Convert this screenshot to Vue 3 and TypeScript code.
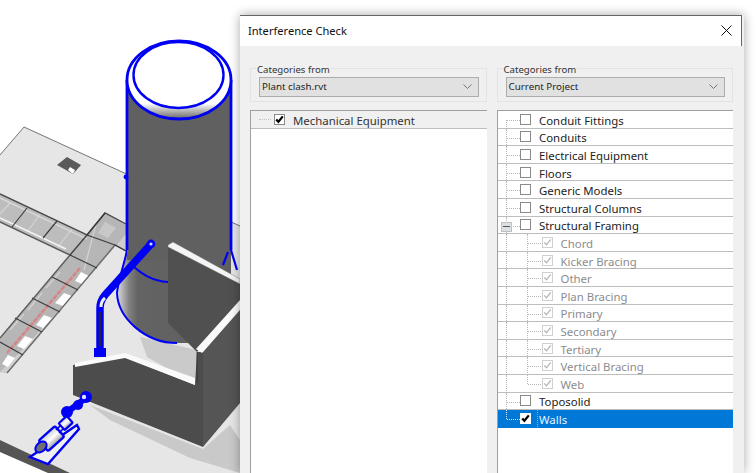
<script setup lang="ts">
interface Row {
  label: string
  level: 0 | 1
  state: 'off' | 'on' | 'dim'
  guides: string
  expander?: boolean
  selected?: boolean
}

const child = (label: string, last = false): Row => ({
  label,
  level: 1,
  state: 'dim',
  guides: last ? 'trunk branch2 stem-end' : 'trunk branch2 stem',
})
const top = (label: string, guides = 'trunk branch1'): Row => ({ label, level: 0, state: 'off', guides })

const rows: Row[] = [
  top('Conduit Fittings', 'trunk-start branch1'),
  top('Conduits'),
  top('Electrical Equipment'),
  top('Floors'),
  top('Generic Models'),
  top('Structural Columns'),
  { label: 'Structural Framing', level: 0, state: 'off', guides: 'trunk branch1', expander: true },
  child('Chord'),
  child('Kicker Bracing'),
  child('Other'),
  child('Plan Bracing'),
  child('Primary'),
  child('Secondary'),
  child('Tertiary'),
  child('Vertical Bracing'),
  child('Web', true),
  top('Toposolid'),
  { label: 'Walls', level: 0, state: 'on', guides: 'trunk-end branch1', selected: true },
]

const ribs = [
  [27, 208, 12, 227], [57, 221, 43, 238], [87, 235, 70, 255],
  [70, 255, 97, 268], [52, 277, 78, 290], [32, 298, 60, 312], [15, 318, 42, 332], [0, 342, 23, 355],
  [87, 235, 115, 245], [105, 213, 87, 235], [115, 245, 126, 251],
]
const pillars = [
  [10, 203, 0, 214], [40, 214, 28, 231], [72, 229, 58, 247],
  [96, 224, 84, 270], [60, 272, 46, 288], [42, 293, 28, 310], [24, 314, 10, 330],
]
const patches = [
  '64,293 72,296 63,306 55,303',
  '44,315 52,318 43,328 36,325',
  '25,336 33,339 24,349 17,346',
  '8,355 15,358 8,367 2,364',
  '81,272 89,276 82,284 75,281',
]
</script>

<template>
  <div class="stage">
    <svg class="scene" width="240" height="473" viewBox="0 0 240 473">
      <defs>
        <linearGradient id="rim" x1="0" y1="0" x2="0" y2="1">
          <stop offset="0.8" stop-color="#ffffff" />
          <stop offset="1" stop-color="#666666" />
        </linearGradient>
        <linearGradient id="flare" x1="0" y1="0" x2="1" y2="0">
          <stop offset="0" stop-color="#dddddd" />
          <stop offset="0.1" stop-color="#808080" />
          <stop offset="0.17" stop-color="#636363" />
          <stop offset="1" stop-color="#5f5f5f" />
        </linearGradient>
        <linearGradient id="motor" x1="0" y1="0" x2="0" y2="1">
          <stop offset="0" stop-color="#cfcfcf" />
          <stop offset="0.5" stop-color="#ffffff" />
          <stop offset="1" stop-color="#9a9a9a" />
        </linearGradient>
      </defs>

      <polygon points="24,127 240,226 240,473 70,473 0,440 0,155" fill="#e6e6e6" />
      <polyline points="0,155 24,127 240,226" fill="none" stroke="#555" stroke-width="0.8" />
      <polygon points="0,440 70,473 48,473 0,452" fill="#555" />
      <polygon points="57,165 67,157 81,165 73,174" fill="#5a5a5a" />
      <polygon points="68,170 70,167 75,170 73,174" fill="#fff" />

      <polygon points="0,194 87,235 70,255 0,222" fill="#bdbdbd" />
      <polygon points="70,255 105,213 126,224 126,251 115,245 7,373 0,372 0,338" fill="#b6b6b6" />
      <polygon points="97,268 126,234 126,251 115,245 7,373 0,372 26,346" fill="#cfcfcf" />
      <polygon v-for="p in patches" :key="p" :points="p" fill="#fff" />
      <polygon points="105,222 116,228 108,238 98,233" fill="#c8c8c8" />
      <line v-for="p in pillars" :key="p.join()" :x1="p[0]" :y1="p[1]" :x2="p[2]" :y2="p[3]" stroke="#d4d4d4" stroke-width="1.2" />
      <line x1="80" y1="268" x2="7" y2="353" stroke="#d88484" stroke-width="2.5" stroke-dasharray="5 1" />
      <polyline points="0,198 87,239" fill="none" stroke="#dcdcdc" stroke-width="1.2" />
      <polyline points="0,218 66,249" fill="none" stroke="#f4f4f4" stroke-width="1.5" />
      <polyline points="0,194 87,235 105,213 126,224" fill="none" stroke="#4a4a4a" stroke-width="1.4" />
      <polyline points="0,222 70,255 0,338" fill="none" stroke="#5a5a5a" stroke-width="1.4" />
      <polyline points="126,251 115,245 7,373" fill="none" stroke="#6a6a6a" stroke-width="1.4" />
      <line v-for="r in ribs" :key="r.join()" :x1="r[0]" :y1="r[1]" :x2="r[2]" :y2="r[3]" stroke="#3c3c3c" stroke-width="1.2" />

      <polygon points="90,405 203,449 230,425 240,440 240,473 190,458 110,420" fill="#c9c9c9" />
      <polygon points="140,337 197,350 197,385 147,357" fill="#cacaca" />

      <path d="M127 250 C125 262 118 280 117 293 C118 318 145 343 177 343 L240 343 L240 250 Z" fill="url(#flare)" />
      <polygon points="231,250 240,250 240,343 200,343 231,290" fill="#e6e6e6" />
      <path d="M127 250 C125 262 118 280 117 293 C118 318 145 343 177 343" fill="none" stroke="#0000f5" stroke-width="2" />
      <rect x="127" y="80" width="104" height="180" fill="#606060" />
      <path d="M133 266 C142 274 152 281 168 282" fill="none" stroke="#0000f5" stroke-width="2.2" />
      <line x1="127" y1="80" x2="127" y2="250" stroke="#0000f5" stroke-width="2.8" />
      <line x1="231" y1="80" x2="231" y2="250" stroke="#0000f5" stroke-width="2.8" />
      <circle cx="126" cy="177" r="2.4" fill="#0000f5" />
      <path d="M231 250 L237 270 M228 252 L223 265" fill="none" stroke="#0000f5" stroke-width="2.2" />
      <ellipse cx="179" cy="80" rx="52" ry="39" fill="url(#rim)" stroke="#0000f5" stroke-width="2.8" />
      <ellipse cx="178.5" cy="75" rx="45" ry="33" fill="#fff" stroke="#0000f5" stroke-width="2.4" />

      <path d="M151 244 L105 295 Q100 301 100 308 L100 352" fill="none" stroke="#0000f5" stroke-width="7.5" />
      <rect x="94" y="348" width="12" height="9" fill="#0000f5" />
      <line x1="100" y1="312" x2="100" y2="346" stroke="#22224a" stroke-width="2.4" />
      <path d="M101 307 Q101 301 105 298" fill="none" stroke="#eee" stroke-width="3" />
      <circle cx="151" cy="244" r="4.4" fill="#0000f5" />
      <circle cx="151" cy="244" r="1.6" fill="#cfd6ff" />

      <polygon points="168,246 240,283 240,303 197,352 168,323" fill="#505050" />
      <polygon points="173,242 240,279 240,284 168,247 168,245" fill="#f4f4f4" stroke="#666" stroke-width="0.4" />
      <polygon points="73,365 125,357 195,385 197,352 203,352 203,447 73,395" fill="#4c4c4c" />
      <polygon points="203,352 240,310 240,403 203,447" fill="#555" />
      <polygon points="196,349 240,300 240,309 202,353" fill="#fafafa" />
      <polygon points="75,363 125,353 195,378 195,385 125,358 75,367" fill="#fafafa" />
      <line x1="197" y1="352" x2="197" y2="383" stroke="#333" stroke-width="0.8" />

      <polygon points="30,457 77,425 79,429 48,464" fill="#efefef" stroke="#0000f5" stroke-width="2.4" />
      <rect x="41" y="433" width="22" height="14" rx="2" transform="rotate(-42 50 440)" fill="url(#motor)" stroke="#0000f5" stroke-width="2.4" />
      <ellipse cx="41" cy="447" rx="4.5" ry="6.5" transform="rotate(48 41 447)" fill="#707070" stroke="#0000f5" stroke-width="2" />
      <path d="M56 430 L62 424 M59 433 L65 427" fill="none" stroke="#0000f5" stroke-width="1.6" />
      <rect x="60" y="419" width="11" height="9" rx="1" transform="rotate(-42 65 423)" fill="url(#motor)" stroke="#0000f5" stroke-width="2.2" />
      <line x1="66" y1="413" x2="87" y2="397" stroke="#0000f5" stroke-width="6" />
      <circle cx="67" cy="412" r="6" fill="#0000f5" />
      <circle cx="78" cy="405" r="5" fill="#0000f5" />
      <circle cx="86" cy="397" r="6" fill="#0000f5" />
      <circle cx="84" cy="397" r="2.2" fill="#dfe3ff" />
    </svg>

    <section class="dialog">
      <header class="titlebar">
        <span class="title">Interference Check</span>
        <svg class="close" width="11" height="11" viewBox="0 0 11 11">
          <path d="M.5.5l10 10M10.5.5l-10 10" stroke="#111" fill="none" />
        </svg>
      </header>

      <div class="panels">
        <div class="panel panel-left">
          <fieldset class="group">
            <legend>Categories from</legend>
            <div class="select">
              <span>Plant clash.rvt</span>
              <svg width="9" height="5" viewBox="0 0 9 5"><path d="M.5.5l4 4 4-4" fill="none" stroke="#777" /></svg>
            </div>
          </fieldset>
          <div class="tree">
            <div class="row row-source">
              <i class="stub"></i>
              <span class="box">
                <svg width="9" height="9" viewBox="0 0 9 9"><path d="M1.2 4.4l2.2 2.4L7.8 1.4" fill="none" stroke="#000" stroke-width="2.2" /></svg>
              </span>
              <span class="label">Mechanical Equipment</span>
            </div>
          </div>
        </div>

        <div class="panel panel-right">
          <fieldset class="group">
            <legend>Categories from</legend>
            <div class="select">
              <span>Current Project</span>
              <svg width="9" height="5" viewBox="0 0 9 5"><path d="M.5.5l4 4 4-4" fill="none" stroke="#777" /></svg>
            </div>
          </fieldset>
          <div class="tree">
            <div
              v-for="row in rows"
              :key="row.label"
              class="row"
              :class="[row.guides, { child: row.level === 1, dim: row.state === 'dim', selected: row.selected }]"
            >
              <span v-if="row.expander" class="expander"><i></i></span>
              <span class="box">
                <svg v-if="row.state !== 'off'" width="9" height="9" viewBox="0 0 9 9">
                  <path
                    d="M1.2 4.4l2.2 2.4L7.8 1.4"
                    fill="none"
                    :stroke="row.state === 'on' ? '#000' : '#b5b5b5'"
                    :stroke-width="row.state === 'on' ? 2.2 : 1.3"
                  />
                </svg>
              </span>
              <span class="label">{{ row.label }}</span>
            </div>
          </div>
        </div>
      </div>
    </section>
  </div>
</template>

<style scoped>
.stage {
  position: relative;
  width: 756px;
  height: 473px;
  overflow: hidden;
  background: #fff;
  font-family: "Noto Sans", "Open Sans", sans-serif;
  color: #222;
}
.scene {
  position: absolute;
  left: 0;
  top: 0;
}
.dialog {
  position: absolute;
  left: 240px;
  top: 15px;
  width: 504px;
  height: 458px;
  display: flex;
  flex-direction: column;
  background: #f0f0f0;
  box-shadow: 0 0 10px rgba(0, 0, 0, 0.35);
}
.titlebar {
  box-sizing: border-box;
  height: 31px;
  margin-right: 2px;
  padding: 0 9px 1px 8px;
  display: flex;
  align-items: center;
  justify-content: space-between;
  background: #fff;
  border-top: 1px solid #666;
  border-right: 1px solid #666;
}
.title {
  font-size: 11.1px;
  color: #111;
}
.panels {
  display: flex;
  flex: 1;
  min-height: 0;
  padding: 22px 11px 0 10px;
  gap: 9.5px;
}
.panel {
  display: flex;
  flex-direction: column;
  gap: 8px;
  min-height: 0;
}
.panel-left {
  width: 237px;
}
.panel-right {
  width: 236px;
}
.group {
  box-sizing: border-box;
  height: 34px;
  margin: 0;
  padding: 0 7px 0 8px;
  border: 1px solid #e3e3e3;
  position: relative;
}
.group legend {
  position: absolute;
  left: 5px;
  top: -5px;
  padding: 0 1px;
  font-size: 9.6px;
  line-height: 11px;
  color: #333;
  background: #f0f0f0;
}
.select {
  box-sizing: border-box;
  height: 19.5px;
  margin-top: 8px;
  padding: 0 3px 0 2px;
  display: flex;
  align-items: center;
  justify-content: space-between;
  background: #e1e1e1;
  border: 1px solid #adadad;
  font-size: 9.8px;
  color: #222;
}
.select svg {
  margin-right: 3px;
}
.tree {
  flex: 1;
  background: #fff;
  border-top: 1px solid #a0a0a0;
  border-left: 1px solid #a0a0a0;
}
.row {
  position: relative;
  box-sizing: border-box;
  height: 17.6px;
  display: flex;
  align-items: center;
  gap: 8px;
  padding-left: 22.5px;
  border-bottom: 1px solid #bdbdbd;
  font-size: 11.4px;
  color: #222;
}
.row.child {
  padding-left: 44px;
  color: #8c8c8c;
}
.row-source {
  padding-left: 23px;
  background: #f0f0f0;
  color: #333;
}
.stub {
  position: absolute;
  left: 8px;
  top: 8px;
  width: 12px;
  border-top: 1px dotted #c4c4c4;
}
.box {
  box-sizing: border-box;
  flex: none;
  width: 11px;
  height: 11px;
  display: flex;
  align-items: center;
  justify-content: center;
  background: #fff;
  border: 1px solid #8a8a8a;
}
.dim .box {
  border-color: #d0d0d0;
}
.label {
  line-height: 16px;
  margin-top: 3px;
  white-space: nowrap;
}
.expander {
  position: absolute;
  left: 3px;
  top: 5px;
  z-index: 1;
  box-sizing: border-box;
  width: 11px;
  height: 10px;
  display: flex;
  align-items: center;
  justify-content: center;
  background: #dcdfe4;
  border: 1px solid #c0c0c0;
}
.expander i {
  width: 7px;
  border-top: 1px solid #555;
}
.trunk::before,
.trunk-start::before,
.trunk-end::before {
  content: "";
  position: absolute;
  left: 8px;
  border-left: 1px dotted #b8b8b8;
}
.trunk::before {
  top: 0;
  height: 18px;
}
.trunk-start::before {
  top: 9px;
  height: 9px;
}
.trunk-end::before {
  top: 0;
  height: 9px;
}
.branch1::after,
.branch2::after {
  content: "";
  position: absolute;
  top: 9px;
  border-top: 1px dotted #b8b8b8;
}
.branch1::after {
  left: 9px;
  width: 13px;
}
.branch2::after {
  left: 30px;
  width: 13px;
}
.stem .label::before,
.stem-end .label::before {
  content: "";
  position: absolute;
  left: 29px;
  border-left: 1px dotted #b8b8b8;
}
.stem .label::before {
  top: 0;
  height: 18px;
}
.stem-end .label::before {
  top: 0;
  height: 9px;
}
.row.selected {
  background: #0078d7;
  border-bottom-color: #0078d7;
  color: #e6f2fc;
}
.selected.trunk-end::before,
.selected.branch1::after {
  border-color: #d5e8f8;
  border-width: 1px;
}
.selected .box {
  border-color: #fff;
}
.selected .label {
  align-self: stretch;
  flex: 1;
  margin: 0 0 0 -2px;
  padding-left: 1px;
  padding-top: 1px;
  line-height: 18px;
  border-left: 1px dotted #7fb4de;
}
</style>
